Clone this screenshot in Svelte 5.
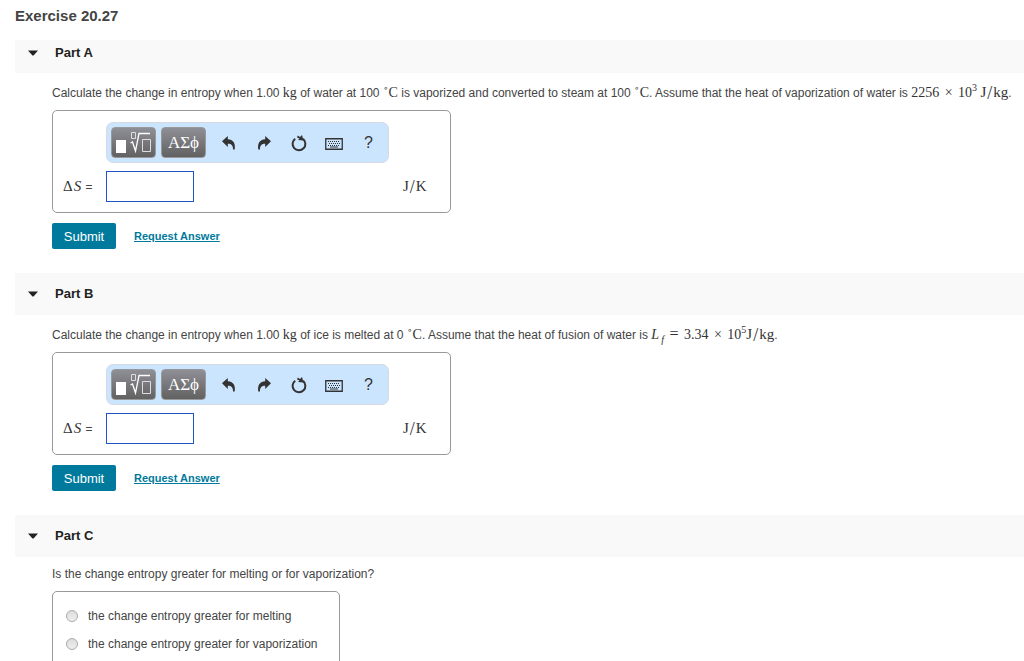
<script>
	const parts = [
		{ id: 'a', title: 'Part A' },
		{ id: 'b', title: 'Part B' }
	];
	const choices = ['melting', 'vaporization'];

	let open = $state({ a: true, b: true, c: true });
	let answers = $state({ a: '', b: '' });
	let choice = $state('');

	function addText(id, text) {
		answers[id] += text;
	}
</script>

{#snippet header(id, title)}
	<h2 class="part-header">
		<button class="toggle" aria-expanded={open[id]} onclick={() => (open[id] = !open[id])}>
			<svg class="arrow" class:closed={!open[id]} viewBox="0 0 10 6"><path d="M0 .5h10L6 5q-1 1-2 0z" /></svg>
			{title}
		</button>
	</h2>
{/snippet}

{#snippet toolbar(id)}
	<div class="toolbar">
		<button class="palette" aria-label="Templates">
			<svg width="35" height="24" viewBox="0 0 35 24" fill="none" stroke="#fff">
				<path d="M0 9h10v13H0z" fill="#fff" stroke="none" />
				<path d="M15.5 1.5h4v6h-4z" stroke="#ddd" />
				<path d="M14.500 12l2-1 3 9 3.500-17.500H34" stroke-width="1.300" />
				<path d="M26.500 8.500h8v12h-8z" stroke="#ddd" />
			</svg>
		</button>
		<button class="palette greek" onclick={() => addText(id, 'Σ')}>ΑΣϕ</button>
		<button class="tool" aria-label="Undo">
			<svg width="14" height="14" viewBox="0 0 14 14"><path d="M5.800 0v3.200C11 3.400 13.800 7 12.700 13.500H11C11.200 9.800 9.500 7.800 5.800 7.800v3.200L0 5.300z" /></svg>
		</button>
		<button class="tool" aria-label="Redo">
			<svg width="14" height="14" viewBox="0 0 14 14"><path d="M8.200 0v3.200C3 3.400.2 7 1.300 13.500H3C2.800 9.800 4.500 7.800 8.200 7.800v3.200L14 5.300z" /></svg>
		</button>
		<button class="tool" aria-label="Reset" onclick={() => (answers[id] = '')}>
			<svg width="16" height="18" viewBox="0 0 16 18">
				<path d="M4.200 4.700A6.400 6.400 0 1 0 12 4.900" fill="none" stroke="#333" stroke-width="2" />
				<path d="M6.800 1.500 9 3l2-2 1.500 5.500L7 6l1.500-1.500-2.500-1z" />
			</svg>
		</button>
		<button class="tool" aria-label="Keyboard">
			<svg class="keyboard" width="18" height="12" viewBox="0 0 18 12">
				<path d="M.75.75h16.500v10.500H.75z" fill="none" stroke="#333" stroke-width="1.300" />
				<path d="M3 3.500h12M4 5.500h11M3 7.500h12" fill="none" stroke="#333" stroke-dasharray="1 1" />
				<path d="M5 9h8" stroke="#333" />
			</svg>
		</button>
		<button class="tool help" aria-label="Help">?</button>
	</div>
{/snippet}

<main>
	<h1>Exercise 20.27</h1>

	{#each parts as part}
		<section>
			{@render header(part.id, part.title)}
			{#if open[part.id]}
				<div class="body">
					{#if part.id == 'a'}
						<p>Calculate the change in entropy when 1.00 <span class="math">kg</span> of water at 100 <span class="math deg"><sup>∘</sup>C</span> is vaporized and converted to steam at 100 <span class="math deg"><sup>∘</sup>C</span>. Assume that the heat of vaporization of water is <span class="math">2256 <span class="op">×</span> 10<sup>3</sup></span> <span class="math unit">J<span class="slash">/</span>kg</span>.</p>
					{:else}
						<p>Calculate the change in entropy when 1.00 <span class="math">kg</span> of ice is melted at 0 <span class="math deg"><sup>∘</sup>C</span>. Assume that the heat of fusion of water is <span class="math"><i>L</i><sub>f</sub> <span class="op eq">=</span> 3.34 <span class="op">×</span> 10<sup>5</sup></span><span class="math unit">J<span class="slash">/</span>kg</span>.</p>
					{/if}
					<div class="answer">
						{@render toolbar(part.id)}
						<label for="answer-{part.id}"><span class="math">Δ<i>S</i></span> =</label>
						<input id="answer-{part.id}" class="field" type="text" bind:value={answers[part.id]} />
						<span class="math unit result">J<span class="slash">/</span>K</span>
					</div>
					<div class="actions">
						<button class="submit">Submit</button>
						<a href="#answer-{part.id}">Request Answer</a>
					</div>
				</div>
			{/if}
		</section>
	{/each}

	<section>
		{@render header('c', 'Part C')}
		{#if open.c}
			<div class="body last">
				<p>Is the change entropy greater for melting or for vaporization?</p>
				<div class="choices">
					{#each choices as name}
						<label><input type="radio" name="choice" value={name} bind:group={choice} />the change entropy greater for {name}</label>
					{/each}
				</div>
			</div>
		{/if}
	</section>
</main>

<style>
	:global(html) { height: 100%; overflow: hidden; }
	:global(body) { height: 100%; margin: 0; overflow: auto; scrollbar-width: none; background: #fff; }
	main {
		padding-left: 15px;
		font: 12px/20px "Liberation Sans", Arial, sans-serif;
		color: #444;
	}
	h1 { margin: 0; padding: 6px 0 14px; font-size: 15px; line-height: 20px; }
	.part-header { margin: 0; padding: 11px 0; background: #f9f9f9; }
	section:first-of-type .part-header { padding: 3px 0 10px; }
	button { font-family: inherit; cursor: pointer; }
	.toggle {
		display: flex;
		align-items: center;
		gap: 17px;
		width: 100%;
		padding: 0 13px;
		border: 0;
		background: none;
		color: #222;
		font-size: 13px;
		font-weight: bold;
		line-height: 20px;
	}
	.arrow { width: 10px; height: 6px; fill: #222; }
	.arrow.closed { transform: rotate(-90deg); }
	.body { padding: 10px 0 24px 37px; }
	.body.last { padding-top: 7px; }
	p { margin: 0; height: 20px; white-space: nowrap; }
	.math { font-family: "Liberation Serif", "Times New Roman", serif; font-size: 14px; line-height: 1; color: #333; }
	sup, sub { font-size: 10px; line-height: 0; }
	sub { margin-left: 2px; font-style: italic; }
	.deg sup { font-family: "DejaVu Sans", sans-serif; font-size: 9px; }
	.slash { margin: 0 1px; font-size: 18px; line-height: 0; vertical-align: -2px; }
	.op { margin: 0 2px; }
	.eq { font-size: 16px; line-height: 0; }
	.answer {
		display: grid;
		grid-template-columns: 43px 88px 1fr;
		align-items: center;
		row-gap: 8px;
		box-sizing: border-box;
		width: 399px;
		max-width: 100%;
		margin-top: 7px;
		padding: 11px 10px 10px;
		border: 1px solid #999;
		border-radius: 5px;
	}
	.answer label .math { font-size: 15px; }
	.answer label i { margin: 0 1px; }
	.toolbar {
		grid-column: 2 / -1;
		justify-self: start;
		display: flex;
		align-items: center;
		box-sizing: border-box;
		width: 283px;
		height: 41px;
		padding: 0 3px 0 4px;
		border: 1px solid #d5d9e2;
		border-radius: 7px;
		background: #cce5ff;
	}
	.palette {
		display: flex;
		flex: none;
		align-items: center;
		justify-content: center;
		width: 45px;
		height: 31px;
		margin-right: 5px;
		padding: 0;
		border: 1px solid #999;
		border-radius: 4px;
		background: linear-gradient(#8e8e96, #626262);
		color: #fff;
	}
	.greek { font: 17px "Liberation Serif", serif; }
	.tool { display: flex; flex: none; align-items: center; justify-content: center; width: 35px; height: 30px; padding: 0; border: 0; background: none; color: #333; fill: #333; }
	.help { font-size: 16px; }
	.keyboard { margin-top: 3px; }
	.field { box-sizing: border-box; width: 88px; height: 31px; padding: 0 6px; border: 1px solid #1d55c4; background: #fff; font-size: 14px; }
	.result { margin-left: 209px; }
	.unit { font-size: 15px; }
	.actions { display: flex; align-items: center; gap: 18px; margin-top: 10px; }
	.submit { width: 64px; height: 26px; padding: 0; border: 0; border-radius: 2px; background: #007a9c; color: #fff; font-size: 13px; }
	a { color: #007a9c; font-size: 11px; font-weight: bold; }
	.choices {
		display: flex;
		flex-direction: column;
		gap: 8px;
		box-sizing: border-box;
		width: 288px;
		margin-top: 7px;
		padding: 14px 13px;
		border: 1px solid #999;
		border-radius: 5px;
	}
	.choices label { display: flex; align-items: center; gap: 10px; }
	input[type="radio"] {
		appearance: none;
		width: 12px;
		height: 12px;
		margin: 0;
		border: 1px solid #aaa;
		border-radius: 50%;
		background: linear-gradient(#ddd, #eee);
	}
	input[type="radio"]:checked { background: radial-gradient(#444 35%, #eee 40%); }
</style>
